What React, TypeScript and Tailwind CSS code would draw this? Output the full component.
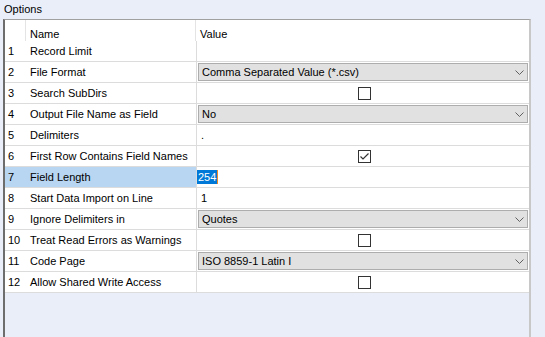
type Row = {
  n: number
  name: string
  kind: 'text' | 'combo' | 'check' | 'edit'
  value?: string
  checked?: boolean
}

const rows: Row[] = [
  { n: 1, name: 'Record Limit', kind: 'text', value: '' },
  { n: 2, name: 'File Format', kind: 'combo', value: 'Comma Separated Value (*.csv)' },
  { n: 3, name: 'Search SubDirs', kind: 'check', checked: false },
  { n: 4, name: 'Output File Name as Field', kind: 'combo', value: 'No' },
  { n: 5, name: 'Delimiters', kind: 'text', value: '.' },
  { n: 6, name: 'First Row Contains Field Names', kind: 'check', checked: true },
  { n: 7, name: 'Field Length', kind: 'edit', value: '254' },
  { n: 8, name: 'Start Data Import on Line', kind: 'text', value: '1' },
  { n: 9, name: 'Ignore Delimiters in', kind: 'combo', value: 'Quotes' },
  { n: 10, name: 'Treat Read Errors as Warnings', kind: 'check', checked: false },
  { n: 11, name: 'Code Page', kind: 'combo', value: 'ISO 8859-1 Latin I' },
  { n: 12, name: 'Allow Shared Write Access', kind: 'check', checked: false },
]

function Chevron() {
  return (
    <svg width="9" height="5" viewBox="0 0 9 5" className="shrink-0">
      <path d="M0.5 0.5 L4.5 4.5 L8.5 0.5" fill="none" stroke="#606060" strokeWidth="1" />
    </svg>
  )
}

function CheckBox({ checked }: { checked?: boolean }) {
  return (
    <div className="w-[13px] h-[13px] border border-[#333333] bg-white flex items-center justify-center">
      {checked && (
        <svg width="11" height="11" viewBox="0 0 11 11">
          <path d="M1.5 5.5 L4 8 L9.5 2.5" fill="none" stroke="#333333" strokeWidth="1.2" />
        </svg>
      )}
    </div>
  )
}

function ValueCell({ row }: { row: Row }) {
  if (row.kind === 'combo') {
    return (
      <div className="flex-1 h-full p-[1px]">
        <div className="h-full border border-[#adadad] bg-[#e1e1e1] flex items-center pl-[3px] pr-[3px]">
          <span className="flex-1 truncate">{row.value}</span>
          <Chevron />
        </div>
      </div>
    )
  }
  if (row.kind === 'check') {
    return (
      <div className="flex-1 h-full flex items-center justify-center pl-[3px]">
        <CheckBox checked={row.checked} />
      </div>
    )
  }
  if (row.kind === 'edit') {
    return (
      <div className="flex-1 h-full flex items-center">
        <span className="bg-[#0078d7] text-white leading-[14px] px-[1px]">{row.value}</span>
        <span className="w-[1px] h-[14px] bg-[#f08a24]" />
      </div>
    )
  }
  return <div className="flex-1 h-full flex items-center pl-[4px]">{row.value}</div>
}

export default function App() {
  return (
    <div
      className="w-[545px] h-[337px] bg-[#e9eef8] flex flex-col text-[11px] text-black overflow-hidden whitespace-nowrap"
      style={{ fontFamily: '"Liberation Sans", Arial, sans-serif' }}
    >
      <div className="h-[19px] pl-[4px] pt-[3px] leading-[13px]">Options</div>
      <div className="ml-[3px] w-[528px] flex-1 border-t border-t-[#a0a0a0] border-l-2 border-l-[#6d6d6d] border-r-2 border-r-[#c8c8c8]">
        <div className="flex h-[21px] bg-white">
          <div className="w-[21px] border-r border-[#e4e4e4]" />
          <div className="w-[170px] pl-[4px] pt-[6px] border-r border-[#e4e4e4]">Name</div>
          <div className="flex-1 pl-[4px] pt-[6px]">Value</div>
        </div>
        {rows.map((row) => {
          const sel = row.kind === 'edit'
          return (
            <div key={row.n} className="flex h-[21px] bg-white border-b border-[#dcdcdc]">
              <div className={`w-[22px] flex items-center pl-[3px] ${sel ? 'bg-[#b8d6f2]' : ''}`}>{row.n}</div>
              <div className={`w-[170px] flex items-center pl-[3px] border-r border-[#dcdcdc] ${sel ? 'bg-[#b8d6f2]' : ''}`}>
                {row.name}
              </div>
              <ValueCell row={row} />
            </div>
          )
        })}
      </div>
    </div>
  )
}
